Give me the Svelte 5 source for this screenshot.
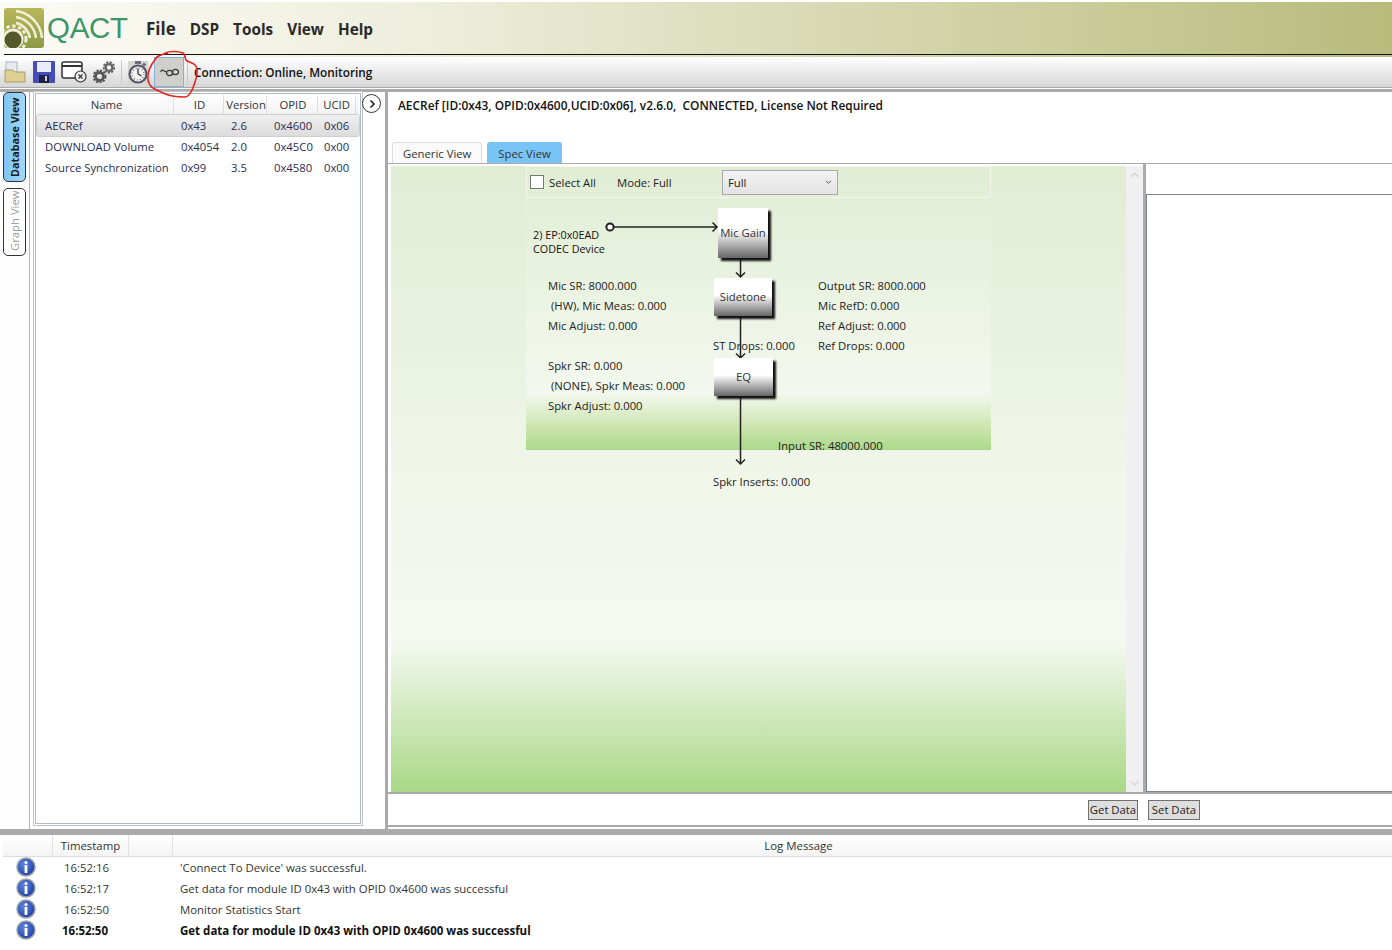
<script>
	const menus = ['File', 'DSP', 'Tools', 'View', 'Help']
	const modules = [
		{ name: 'AECRef', id: '0x43', version: '2.6', opid: '0x4600', ucid: '0x06' },
		{ name: 'DOWNLOAD Volume', id: '0x4054', version: '2.0', opid: '0x45C0', ucid: '0x00' },
		{ name: 'Source Synchronization', id: '0x99', version: '3.5', opid: '0x4580', ucid: '0x00' }
	]
	const logs = [
		{ time: '16:52:16', msg: "'Connect To Device' was successful." },
		{ time: '16:52:17', msg: 'Get data for module ID 0x43 with OPID 0x4600 was successful' },
		{ time: '16:52:50', msg: 'Monitor Statistics Start' },
		{ time: '16:52:50', msg: 'Get data for module ID 0x43 with OPID 0x4600 was successful', bold: true }
	]
	// labels on the spec diagram: [x, y, text, tight], relative to the diagram box
	const labels = [
		[7, 61, '2) EP:0x0EAD', true],
		[7, 75, 'CODEC Device', true],
		[22, 112, 'Mic SR: 8000.000'],
		[25, 132, '(HW), Mic Meas: 0.000'],
		[22, 152, 'Mic Adjust: 0.000'],
		[22, 192, 'Spkr SR: 0.000'],
		[25, 212, '(NONE), Spkr Meas: 0.000'],
		[22, 232, 'Spkr Adjust: 0.000'],
		[187, 172, 'ST Drops: 0.000'],
		[292, 112, 'Output SR: 8000.000'],
		[292, 132, 'Mic RefD: 0.000'],
		[292, 152, 'Ref Adjust: 0.000'],
		[292, 172, 'Ref Drops: 0.000'],
		[252, 272, 'Input SR: 48000.000'],
		[187, 308, 'Spkr Inserts: 0.000']
	]
	const blocks = [
		{ name: 'Mic Gain', x: 192, y: 42, w: 50, h: 50 },
		{ name: 'Sidetone', x: 188, y: 112, w: 58, h: 38 },
		{ name: 'EQ', x: 188, y: 192, w: 59, h: 38 }
	]
</script>

<div class="app">
	<header class="titlebar">
		<div class="titleinner">
			<svg class="logo" viewBox="0 0 40 40" width="40" height="40">
				<defs>
					<linearGradient id="olive" x1="0" y1="0" x2="0" y2="1">
						<stop offset="0" stop-color="#b9b75a" />
						<stop offset="1" stop-color="#8c9a45" />
					</linearGradient>
				</defs>
				<rect width="40" height="40" rx="3" fill="url(#olive)" />
				<path d="M12 3 A30 30 0 0 1 38 30" fill="none" stroke="#f0f0d8" stroke-width="2.500" />
				<path d="M12 9 A24 24 0 0 1 32 30" fill="none" stroke="#f0f0d8" stroke-width="2.500" />
				<path d="M12 15 A18 18 0 0 1 26 30" fill="none" stroke="#f0f0d8" stroke-width="2.500" />
				<circle cx="9" cy="31" r="13" fill="none" stroke="#efefd6" stroke-width="3" stroke-dasharray="3.500 2.500" />
				<circle cx="9" cy="31" r="10.500" fill="#efefd6" />
				<circle cx="9" cy="32" r="8.500" fill="#54582a" />
			</svg>
			<span class="brand">QACT</span>
			<nav class="menu">
				{#each menus as m, i}
					<span class:first={i === 0}>{m}</span>
				{/each}
			</nav>
		</div>
	</header>

	<div class="toolbar">
		<svg viewBox="0 0 22 24" width="22" height="24">
			<rect x="2" y="2" width="11" height="13" fill="#e6ebf2" stroke="#a6b4c4" />
			<path d="M1 10 H9 L11 12 H21 V22 H1 Z" fill="#dfcf92" stroke="#a89c6c" />
		</svg>
		<svg class="save" viewBox="0 0 22 24" width="22" height="24">
			<rect x="0" y="1" width="22" height="22" rx="1" fill="#454db8" />
			<rect x="4" y="2" width="14" height="10" fill="#e9ebf8" />
			<rect x="6" y="15" width="10" height="8" fill="#1e2440" />
			<rect x="12" y="16" width="2" height="5" fill="#c9cde6" />
		</svg>
		<svg viewBox="0 0 26 22" width="26" height="22">
			<rect x="1" y="1" width="20" height="16" rx="2" fill="#fff" stroke="#333" stroke-width="1.500" />
			<path d="M1 5 H21" stroke="#333" stroke-width="2" />
			<circle cx="19.500" cy="15.500" r="5.500" fill="#eee" stroke="#333" stroke-width="1.200" />
			<path d="M17.500 13.500 L21.500 17.500 M21.500 13.500 L17.500 17.500" stroke="#333" stroke-width="1.200" />
		</svg>
		<svg viewBox="0 0 22 22" width="22" height="22">
			<circle cx="6.500" cy="15.500" r="6" fill="none" stroke="#555" stroke-width="2" stroke-dasharray="2.200 1.300" />
			<circle cx="6.500" cy="15.500" r="4" fill="none" stroke="#555" stroke-width="2.800" />
			<circle cx="16" cy="6.500" r="5.200" fill="none" stroke="#666" stroke-width="2" stroke-dasharray="2.200 1.300" />
			<circle cx="16" cy="6.500" r="3.400" fill="none" stroke="#666" stroke-width="2.400" />
		</svg>
		<i class="sep"></i>
		<svg viewBox="0 0 20 24" width="20" height="24">
			<rect x="0" y="1" width="20" height="23" fill="#d8d6cf" />
			<rect x="7" y="1" width="6" height="3" fill="#6b6b7a" />
			<rect x="15" y="3" width="3" height="3" fill="#6b6b7a" transform="rotate(40 16 4)" />
			<circle cx="10" cy="14" r="8.500" fill="#f4f4f4" stroke="#55556a" stroke-width="2.200" />
			<circle cx="10" cy="14" r="6" fill="none" stroke="#777" stroke-width="1.500" stroke-dasharray="1 2.140" />
			<path d="M10 14 L10 8.500 M10 14 L13.500 16" stroke="#333" stroke-width="1.300" />
		</svg>
		<button class="glasses" aria-label="Monitor">
			<svg viewBox="0 0 20 10" width="20" height="10">
				<ellipse cx="10.500" cy="6" rx="3" ry="2.600" fill="none" stroke="#333" stroke-width="1.200" />
				<ellipse cx="16.500" cy="5" rx="3" ry="2.600" fill="none" stroke="#333" stroke-width="1.200" />
				<path d="M13.300 5.500 L13.800 5.300 M7.500 5 L3 3 L1.500 4.800" fill="none" stroke="#333" stroke-width="1.100" />
			</svg>
		</button>
		<i class="sep second"></i>
		<span class="status">Connection: Online, Monitoring</span>
		<svg class="scribble" viewBox="0 0 60 50" width="60" height="50">
			<path d="M21 3 C26 1 34 1 39 3 C42 5 40 9 43 11 C48 13 53 14 53 20 C54 26 51 33 48 40 C46 44 44 47 41 47 C34 47 25 46 19 43 C13 40 5 38 4 30 C3 22 7 14 13 7 C16 5 19 4 24 3" fill="none" stroke="#e8201c" stroke-width="1.600" />
		</svg>
	</div>

	<div class="workspace">
		<aside class="rail">
			<div class="vtab active">Database View</div>
			<div class="vtab">Graph View</div>
		</aside>

		<section class="left">
			<div class="listbox">
				<div class="thead">
					<span class="c-name">Name</span><span class="c-id">ID</span><span class="c-ver">Version</span><span class="c-opid">OPID</span><span class="c-ucid">UCID</span>
				</div>
				{#each modules as m, i}
					<div class="trow" class:selected={i === 0}>
						<span class="c-name">{m.name}</span><span class="c-id">{m.id}</span><span class="c-ver">{m.version}</span><span class="c-opid">{m.opid}</span><span class="c-ucid">{m.ucid}</span>
					</div>
				{/each}
			</div>
			<div class="arrowcol">
				<div class="roundbtn">
					<svg viewBox="0 0 10 10" width="10" height="10"><path d="M3.500 1.500 L7 5 L3.500 8.500" fill="none" stroke="#222" stroke-width="1.600" /></svg>
				</div>
			</div>
		</section>

		<section class="right">
			<div class="info">AECRef [ID:0x43, OPID:0x4600,UCID:0x06], v2.6.0,&nbsp; CONNECTED, License Not Required</div>
			<div class="tabs">
				<div class="tab">Generic View</div>
				<div class="tab on">Spec View</div>
			</div>
			<div class="content">
				<div class="specarea">
					<div class="greenpane">
						<div class="diagram">
							<div class="modebar">
								<span class="check"></span>
								<span class="selall">Select All</span>
								<span class="modelbl">Mode: Full</span>
								<div class="combo">
									<span>Full</span>
									<svg viewBox="0 0 8 6" width="7" height="5"><path d="M1 1 L4 4 L7 1" fill="none" stroke="#555" stroke-width="1.200" /></svg>
								</div>
							</div>

							<svg class="wires" width="465" height="310">
								<circle cx="84" cy="61" r="3.600" fill="#fff" stroke="#222" stroke-width="2" />
								<path d="M88 61 H191 M186.500 56.500 L191 61 L186.500 65.500" fill="none" stroke="#222" stroke-width="1.500" />
								<path d="M214.500 92 V111 M210 106.500 L214.500 111 L219 106.500" fill="none" stroke="#222" stroke-width="1.500" />
								<path d="M214.500 150 V192 M210 187.500 L214.500 192 L219 187.500" fill="none" stroke="#222" stroke-width="1.500" />
								<path d="M214.500 230 V298 M210 293.500 L214.500 298 L219 293.500" fill="none" stroke="#222" stroke-width="1.500" />
							</svg>

							{#each blocks as b}
								<div class="block" style="left:{b.x}px;top:{b.y}px;width:{b.w}px;height:{b.h}px">{b.name}</div>
							{/each}
							{#each labels as l}
								<span class="lbl" class:tight={l[3]} style="left:{l[0]}px;top:{l[1]}px">{l[2]}</span>
							{/each}
						</div>
					</div>
					<div class="vscroll">
						<svg viewBox="0 0 10 6" width="9" height="6"><path d="M1 5 L5 1 L9 5" fill="none" stroke="#d4d4d4" stroke-width="1.400" /></svg>
						<svg viewBox="0 0 10 6" width="9" height="6"><path d="M1 1 L5 5 L9 1" fill="none" stroke="#d4d4d4" stroke-width="1.400" /></svg>
					</div>
				</div>
				<div class="sidepane">
					<div class="sidebox"></div>
				</div>
			</div>
			<div class="actions">
				<button class="get">Get Data</button>
				<button class="set">Set Data</button>
			</div>
		</section>
	</div>

	<footer class="log">
		<div class="loghead">
			<span class="h-ico"></span><span class="h-time">Timestamp</span><span class="h-gap"></span><span class="h-msg">Log Message</span>
		</div>
		{#each logs as l}
			<div class="logrow" class:bold={l.bold}>
				<span class="ico">
					<svg viewBox="0 0 20 20" width="20" height="20">
						<defs>
							<radialGradient id="blue" cx="0.4" cy="0.35" r="0.8">
								<stop offset="0" stop-color="#5f86e0" />
								<stop offset="1" stop-color="#112f9a" />
							</radialGradient>
						</defs>
						<circle cx="10" cy="10" r="9" fill="url(#blue)" stroke="#9aa0a8" stroke-width="1.500" />
						<circle cx="10" cy="5.500" r="1.500" fill="#fff" />
						<rect x="8.600" y="8" width="2.800" height="8" fill="#fff" />
					</svg>
				</span>
				<span class="time">{l.time}</span>
				<span class="msg">{l.msg}</span>
			</div>
		{/each}
	</footer>
</div>

<style>
	:global(body) {
		margin: 0;
		background: #fff;
		font-family: "Open Sans", "Noto Sans", sans-serif;
		font-size: 11.3px;
		color: #222;
		overflow: hidden;
	}
	.app {
		width: 1392px;
		height: 950px;
		display: flex;
		flex-direction: column;
		overflow: hidden;
	}
	.titlebar {
		height: 57px;
		flex: none;
		box-sizing: border-box;
		border-top: 2px solid #fff;
		background: linear-gradient(90deg, #fbfbf6 0%, #eeeedd 30%, #c9cb98 79%, #b8bb7c 100%);
	}
	.titleinner {
		height: 53px;
		margin-left: 4px;
		box-sizing: border-box;
		border-bottom: 1.500px solid #111;
		display: flex;
		align-items: center;
	}
	.logo {
		flex: none;
	}
	.brand {
		font-family: "Liberation Sans", sans-serif;
		font-size: 29.500px;
		color: #3e9568;
		margin-left: 3px;
		width: 99px;
		letter-spacing: -0.3px;
	}
	.menu {
		display: flex;
		align-items: baseline;
		gap: 14px;
		font-family: "Open Sans", sans-serif;
		font-weight: 700;
		font-size: 15.300px;
		color: #2a2a2a;
	}
	.menu .first {
		font-size: 17px;
	}
	.toolbar {
		height: 31px;
		flex: none;
		box-sizing: border-box;
		display: flex;
		align-items: center;
		position: relative;
		padding-left: 4px;
		gap: 6px;
		background: linear-gradient(#fff, #d6d6d6);
		border-bottom: 1px solid #aaa;
	}
	.save {
		margin-left: 1px;
	}
	.sep {
		width: 1px;
		height: 24px;
		background: #c8c8c8;
	}
	.sep.second {
		margin-left: -3px;
	}
	.glasses {
		width: 30px;
		height: 30px;
		padding: 0;
		background: #cfcfcb;
		border: 1px solid #7fb0e0;
		display: flex;
		align-items: center;
		justify-content: center;
	}
	.status {
		font-weight: 600;
		color: #111;
		font-size: 11.800px;
	}
	.scribble {
		position: absolute;
		left: 144px;
		top: -7px;
	}
	.workspace {
		flex: 1;
		display: flex;
		min-height: 0;
		margin-top: 1px;
		border-top: 3px solid #aaa;
	}
	.rail {
		width: 30px;
		flex: none;
		box-sizing: border-box;
		padding: 0 3px 0;
		border-right: 1px solid #b5b5b5;
		background: #fefefe;
		display: flex;
		flex-direction: column;
		gap: 6px;
	}
	.vtab {
		width: 23px;
		flex: none;
		box-sizing: border-box;
		writing-mode: vertical-rl;
		transform: rotate(180deg);
		white-space: nowrap;
		padding: 4px 0;
		line-height: 21px;
		height: 68px;
		border: 1px solid #333;
		border-radius: 5px;
		color: #999;
		background: #fff;
	}
	.vtab.active {
		height: 90px;
		font-weight: 700;
		font-size: 10.800px;
		color: #1c1c1c;
		background: linear-gradient(270deg, #7cc4f4, #a5d8f8);
	}
	.left {
		width: 358px;
		flex: none;
		box-sizing: border-box;
		display: flex;
		padding: 1px 0 5px 5px;
		border-right: 3px solid #aaa;
	}
	.listbox {
		width: 326px;
		flex: none;
		box-sizing: border-box;
		border: 1px solid #aebbc8;
		outline: 1px solid #c4c4c4;
		outline-offset: 1px;
		padding: 1px;
	}
	.thead,
	.trow {
		display: flex;
		align-items: center;
	}
	.thead {
		height: 19px;
		margin-bottom: 1px;
		color: #333;
		background: linear-gradient(#fff, #f2f2f2);
	}
	.thead span {
		text-align: center;
		box-sizing: border-box;
		height: 100%;
		line-height: 19px;
		padding-left: 2px;
		border-right: 1px solid #dedede;
	}
	.thead .c-name {
		padding-left: 3px;
	}
	.thead .c-ucid {
		padding-left: 0;
	}
	.trow {
		height: 21px;
	}
	.trow.selected {
		background: linear-gradient(#f0f0f0, #dcdcdc);
		border-radius: 2px;
		box-shadow: 0 0 0 1px #cfcfcf;
	}
	.trow span {
		padding-left: 8px;
		box-sizing: border-box;
		white-space: nowrap;
		color: #2a2d55;
	}
	.trow span:not(.c-name) {
		padding-left: 7px;
	}
	.trow .c-ucid {
		padding-left: 6px !important;
	}
	.c-name { width: 137px; }
	.c-id { width: 50px; }
	.c-ver { width: 43px; }
	.c-opid { width: 51px; }
	.c-ucid { width: 38px; }
	.arrowcol {
		flex: 1;
		display: flex;
		justify-content: center;
		align-items: flex-start;
		padding: 1px 3px 0 0;
	}
	.roundbtn {
		width: 19px;
		height: 19px;
		box-sizing: border-box;
		border: 1.500px solid #333;
		border-radius: 50%;
		display: flex;
		align-items: center;
		justify-content: center;
		background: #fff;
	}
	.right {
		flex: 1;
		min-width: 0;
		display: flex;
		flex-direction: column;
	}
	.info {
		height: 49px;
		flex: none;
		box-sizing: border-box;
		padding: 5px 0 0 10px;
		font-weight: 600;
		color: #111;
		font-size: 11.900px;
	}
	.tabs {
		height: 23px;
		flex: none;
		box-sizing: border-box;
		display: flex;
		align-items: flex-end;
		padding-left: 4px;
		gap: 5px;
		border-bottom: 1px solid #aaa;
	}
	.tab {
		height: 21px;
		box-sizing: border-box;
		padding: 3px 10px 0;
		border: 1px solid #dcdcdc;
		border-bottom: none;
		border-radius: 3px 3px 0 0;
		background: #fafafa;
		color: #333;
	}
	.tab.on {
		background: #79c4f6;
		border-color: #79c4f6;
	}
	.content {
		flex: 1;
		display: flex;
		min-height: 0;
	}
	.specarea {
		width: 755px;
		flex: none;
		display: flex;
		box-sizing: border-box;
		padding: 2px 0 0 3px;
		border-bottom: 2px solid #aaa;
	}
	.greenpane {
		flex: 1;
		background: linear-gradient(#e0edd3 0%, #f0f6ea 50%, #f4f9f0 76%, #a9d886 100%);
	}
	.diagram {
		position: relative;
		margin-left: 135px;
		width: 465px;
		height: 284px;
		background: linear-gradient(#e0edd3 0%, #f3f8ef 80%, #cce5ae 92%, #aad98a 100%);
	}
	.modebar {
		height: 32px;
		box-sizing: border-box;
		border: 1px solid #f2f6ee;
		display: flex;
		align-items: center;
		padding-left: 3px;
	}
	.check {
		width: 14px;
		height: 14px;
		box-sizing: border-box;
		border: 1px solid #777;
		background: #fff;
		margin-right: 5px;
	}
	.selall {
		width: 68px;
	}
	.modelbl {
		width: 105px;
	}
	.combo {
		width: 116px;
		height: 25px;
		margin-top: 1px;
		box-sizing: border-box;
		border: 1px solid #a9a9a9;
		background: linear-gradient(#f3f3f3, #e3e3e3);
		display: flex;
		align-items: center;
		justify-content: space-between;
		padding: 0 5px;
	}
	.wires {
		position: absolute;
		left: 0;
		top: 0;
		overflow: visible;
		pointer-events: none;
	}
	.block {
		position: absolute;
		display: flex;
		align-items: center;
		justify-content: center;
		padding-bottom: 2px;
		box-sizing: border-box;
		color: #333;
		background: linear-gradient(#fff 0%, #fff 45%, #666 100%);
		box-shadow: 3px 3px 2px #111;
		white-space: nowrap;
	}
	.lbl {
		position: absolute;
		white-space: nowrap;
		color: #222;
		line-height: 16px;
	}
	.lbl.tight {
		font-size: 10.800px;
		font-weight: 500;
		color: #111;
	}
	.vscroll {
		width: 17px;
		background: #f0f0f0;
		display: flex;
		flex-direction: column;
		justify-content: space-between;
		align-items: center;
		padding: 6px 0;
		box-sizing: border-box;
	}
	.sidepane {
		flex: 1;
		box-sizing: border-box;
		border-left: 3px solid #aaa;
		padding-top: 30px;
		border-bottom: 2px solid #aaa;
	}
	.sidebox {
		height: 100%;
		box-sizing: border-box;
		border-left: 1px solid #7c8488;
		border-top: 1px solid #7c8488;
		border-bottom: 1px solid #7c8488;
	}
	.actions {
		height: 33px;
		flex: none;
		margin-bottom: 2px;
		box-sizing: border-box;
		display: flex;
		justify-content: flex-end;
		align-items: center;
		gap: 10px;
		padding: 0 192px 0 0;
		border-bottom: 2px solid #aaa;
	}
	.actions button {
		height: 20px;
		padding: 0;
		font: inherit;
		white-space: nowrap;
		background: #dedede;
		border: 1px solid #6f6f6f;
		color: #222;
	}
	.get { width: 50px; }
	.set { width: 52px; }
	.log {
		height: 121px;
		flex: none;
		border-top: 6px solid #aaa;
		box-sizing: border-box;
		font-size: 11.400px;
	}
	.loghead {
		height: 22px;
		box-sizing: border-box;
		display: flex;
		background: linear-gradient(#fff, #f4f4f4);
		border-bottom: 1px solid #dcdcdc;
		line-height: 21px;
		color: #333;
		margin-left: 3px;
	}
	.loghead span {
		box-sizing: border-box;
		text-align: center;
		border-right: 1px solid #e2e2e2;
	}
	.h-ico { width: 50px; }
	.h-time { width: 76px; }
	.h-gap { width: 44px; }
	.h-msg {
		flex: 1;
		padding-left: 32px;
		border-right: none !important;
	}
	.logrow {
		height: 21px;
		display: flex;
		align-items: center;
		color: #333;
	}
	.logrow.bold {
		font-weight: 700;
		font-size: 11.500px;
		color: #111;
	}
	.ico {
		width: 64px;
		padding-left: 16px;
		box-sizing: border-box;
		display: flex;
		margin-top: -2px;
	}
	.time {
		width: 116px;
		flex: none;
	}
	.bold .time {
		margin-left: -2px;
		width: 118px;
	}
</style>
